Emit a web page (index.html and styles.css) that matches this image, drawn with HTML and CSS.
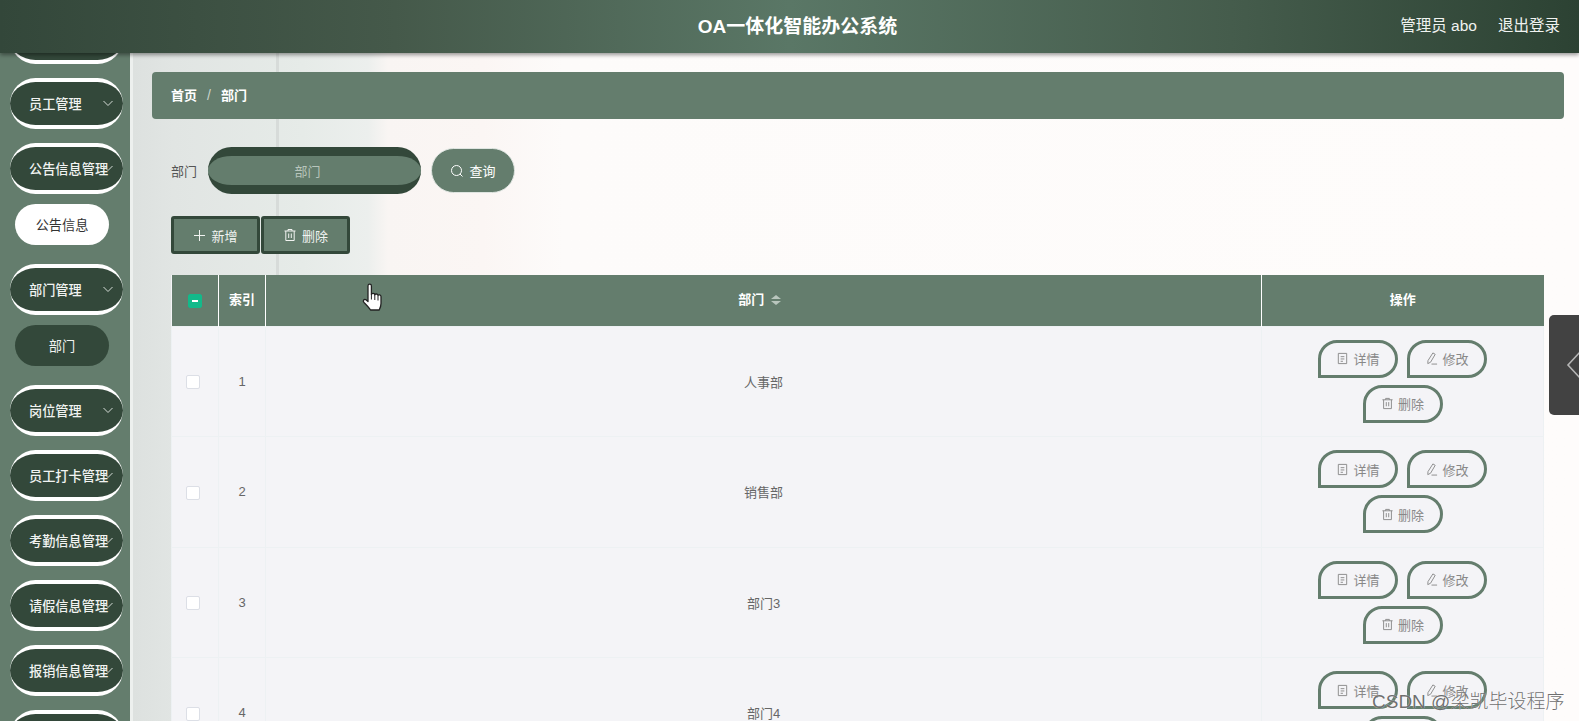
FILE: index.html
```html
<!DOCTYPE html>
<html lang="zh-CN">
<head>
  <meta charset="UTF-8">
  <title>OA一体化智能办公系统</title>
  <link rel="stylesheet" href="styles.css">
</head>
<body>
  <svg class="icon-defs" width="0" height="0">
    <symbol id="i-doc" viewBox="0 0 14 14"><path d="M2.500 1.500h9v11h-9z M5 5h4 M5 7.500h4 M5 10h2.500" fill="none" stroke="currentColor"/></symbol>
    <symbol id="i-edit" viewBox="0 0 14 14"><path d="M8.500 1l2.500 1.500L6 11 3 12.500l.2-3.200z M7 13h6" fill="none" stroke="currentColor"/></symbol>
    <symbol id="i-trash" viewBox="0 0 14 14"><path d="M1.500 3h11 M5 3V1.500h4V3 M2.800 3v9.500h8.400V3 M5.700 5.500v4.500 M8.300 5.500v4.500" fill="none" stroke="currentColor"/></symbol>
    <symbol id="i-down" viewBox="0 0 12 12"><path d="M1.500 4l4.500 4.500L10.500 4" fill="none" stroke="currentColor"/></symbol>
  </svg>

  <header class="topbar">
    <div></div>
    <div class="topbar-title">OA一体化智能办公系统</div>
    <div class="topbar-user">
      <span>管理员 abo</span>
      <span>退出登录</span>
    </div>
  </header>

  <div class="layout">
    <aside class="sidebar">
      <div class="sidebar-thumb"></div>
      <div class="menu-group menu-first"><div class="menu-item"></div></div>
      <div class="menu-group">
        <div class="menu-item">员工管理<svg class="menu-arrow"><use href="#i-down"/></svg></div>
      </div>
      <div class="menu-group">
        <div class="menu-item">公告信息管理<svg class="menu-arrow"><use href="#i-down"/></svg></div>
        <div class="menu-sub">公告信息</div>
      </div>
      <div class="menu-group">
        <div class="menu-item">部门管理<svg class="menu-arrow"><use href="#i-down"/></svg></div>
        <div class="menu-sub menu-sub-active">部门</div>
      </div>
      <div class="menu-group">
        <div class="menu-item">岗位管理<svg class="menu-arrow"><use href="#i-down"/></svg></div>
      </div>
      <div class="menu-group">
        <div class="menu-item">员工打卡管理<svg class="menu-arrow"><use href="#i-down"/></svg></div>
      </div>
      <div class="menu-group">
        <div class="menu-item">考勤信息管理<svg class="menu-arrow"><use href="#i-down"/></svg></div>
      </div>
      <div class="menu-group">
        <div class="menu-item">请假信息管理<svg class="menu-arrow"><use href="#i-down"/></svg></div>
      </div>
      <div class="menu-group">
        <div class="menu-item">报销信息管理<svg class="menu-arrow"><use href="#i-down"/></svg></div>
      </div>
      <div class="menu-group">
        <div class="menu-item"></div>
      </div>
    </aside>

    <main class="content">
      <div class="breadcrumb">
        <b>首页</b>
        <span class="breadcrumb-sep">/</span>
        <b>部门</b>
      </div>

      <div class="search-row">
        <label class="search-label">部门</label>
        <div class="search-input">部门</div>
        <button class="search-btn">
          <svg width="14" height="14" viewBox="0 0 14 14"><circle cx="6.500" cy="6.500" r="5" fill="none" stroke="currentColor"/><path d="M10 10l2.500 2.500" stroke="currentColor"/></svg>
          查询
        </button>
      </div>

      <div class="action-row">
        <button class="action-btn">
          <svg width="13" height="13" viewBox="0 0 13 13"><path d="M6.500 1v11 M1 6.500h11" stroke="currentColor"/></svg>
          新增
        </button>
        <button class="action-btn">
          <svg width="14" height="14"><use href="#i-trash"/></svg>
          删除
        </button>
      </div>

      <table class="data-table">
        <colgroup>
          <col class="col-check"><col class="col-index"><col><col class="col-ops">
        </colgroup>
        <thead>
          <tr>
            <th><span class="check check-on"></span></th>
            <th>索引</th>
            <th class="th-name">部门 <span class="sort"><i class="sort-up"></i><i class="sort-down"></i></span></th>
            <th>操作</th>
          </tr>
        </thead>
        <tbody>
          <tr>
            <td><span class="check"></span></td>
            <td>1</td>
            <td class="cell-name">人事部</td>
            <td>
              <div class="ops">
                <a class="op-btn"><svg><use href="#i-doc"/></svg>详情</a>
                <a class="op-btn"><svg><use href="#i-edit"/></svg>修改</a>
                <a class="op-btn"><svg><use href="#i-trash"/></svg>删除</a>
              </div>
            </td>
          </tr>
          <tr>
            <td><span class="check"></span></td>
            <td>2</td>
            <td class="cell-name">销售部</td>
            <td>
              <div class="ops">
                <a class="op-btn"><svg><use href="#i-doc"/></svg>详情</a>
                <a class="op-btn"><svg><use href="#i-edit"/></svg>修改</a>
                <a class="op-btn"><svg><use href="#i-trash"/></svg>删除</a>
              </div>
            </td>
          </tr>
          <tr>
            <td><span class="check"></span></td>
            <td>3</td>
            <td class="cell-name">部门3</td>
            <td>
              <div class="ops">
                <a class="op-btn"><svg><use href="#i-doc"/></svg>详情</a>
                <a class="op-btn"><svg><use href="#i-edit"/></svg>修改</a>
                <a class="op-btn"><svg><use href="#i-trash"/></svg>删除</a>
              </div>
            </td>
          </tr>
          <tr>
            <td><span class="check"></span></td>
            <td>4</td>
            <td class="cell-name">部门4</td>
            <td>
              <div class="ops">
                <a class="op-btn"><svg><use href="#i-doc"/></svg>详情</a>
                <a class="op-btn"><svg><use href="#i-edit"/></svg>修改</a>
                <a class="op-btn"><svg><use href="#i-trash"/></svg>删除</a>
              </div>
            </td>
          </tr>
        </tbody>
      </table>
    </main>
  </div>

  <div class="side-tab">
    <svg width="30" height="100" viewBox="0 0 30 100"><path d="M32 36L19 50l13 14" fill="none" stroke="#b5b5b5" stroke-width="1.600"/></svg>
  </div>

  <svg class="cursor" width="24" height="32" viewBox="0 0 24 32">
    <path d="M7 3c0-2.400 3.400-2.400 3.400 0v8.500c.4-1.500 3.200-1.400 3.400.4.5-1.400 3-1.200 3.200.6.6-1 2.800-.8 3 1v7c0 3-.8 4.500-1.800 6.500H9.500C8 24.500 5.500 22 3 19.500c-1.700-1.800.2-4 2.200-2.600L7 18.500z" fill="#fff" stroke="#222" stroke-width="1.300" stroke-linejoin="round"/>
    <path d="M10.400 11.500v5 M13.800 12v5 M17 13v4.500" stroke="#222" fill="none"/>
  </svg>

  <div class="watermark">CSDN @梁凯毕设程序</div>
</body>
</html>
```

FILE: styles.css
```css
* {
  box-sizing: border-box;
  margin: 0;
  padding: 0;
}

html, body {
  height: 100%;
  overflow: hidden;
}

body {
  font-family: "Liberation Sans", "Noto Sans CJK SC", sans-serif;
  font-size: 13px;
  color: #666666;
  position: relative;
}

.icon-defs {
  position: absolute;
}

.topbar {
  height: 53px;
  display: grid;
  grid-template-columns: 1fr auto 1fr;
  align-items: center;
  padding: 0 19px 5px 35px;
  color: #ffffff;
  background: linear-gradient(90deg, #33473a 0%, #45594a 25%, #5a7766 50%, #455c4c 78%, #2c4233 100%);
  box-shadow: 0 2px 4px rgba(0, 0, 0, 0.4);
  position: relative;
  z-index: 2;
}

.topbar-title {
  font-size: 19px;
  font-weight: bold;
}

.topbar-user {
  display: flex;
  justify-content: flex-end;
  gap: 21px;
  font-size: 15.500px;
  color: #f0f3f1;
}

.layout {
  display: flex;
  height: 668px;
}

.sidebar {
  width: 133px;
  flex-shrink: 0;
  background: #647d6d;
  border-right: 3px solid #edf0ee;
  padding: 0 7px 0 10px;
  overflow: hidden;
  position: relative;
}

.sidebar-thumb {
  position: absolute;
  top: 113px;
  right: -3px;
  width: 1px;
  height: 471px;
  background: #b9c2bd;
}

.menu-group {
  display: flow-root;
  margin-bottom: 14px;
}

.menu-first {
  margin-top: -40px;
}

.menu-item {
  height: 51px;
  display: flex;
  align-items: center;
  padding-left: 19px;
  background: #33483a;
  border-style: solid;
  border-color: #ffffff;
  border-width: 4px 0;
  border-radius: 26px;
  color: #f1f3f1;
  font-size: 13.200px;
  font-weight: 500;
  white-space: nowrap;
  position: relative;
}

.menu-arrow {
  position: absolute;
  right: 9px;
  top: 15px;
  width: 12px;
  height: 12px;
  color: #d5dcd7;
}

.menu-sub {
  height: 41px;
  width: 94px;
  margin: 10px 0 5px 5px;
  display: flex;
  align-items: center;
  justify-content: center;
  border-radius: 21px;
  background: #ffffff;
  color: #333333;
  font-size: 13.200px;
}

.menu-sub-active {
  background: #33483a;
  color: #f1f3f1;
}

.content {
  flex: 1;
  min-width: 0;
  padding: 19px 15px 0 19px;
  background:
    linear-gradient(#d7dbd9, #d7dbd9) 143px 0 / 3px 100% no-repeat,
    linear-gradient(90deg, #dde1df 0, #e1e5e3 40px, #e6ebe8 170px, #ecefed 235px, #f9f5f3 255px, #fbf6f4 350px, #fdfbfa 430px, #fefcfb 100%);
}

.breadcrumb {
  height: 47px;
  display: flex;
  align-items: center;
  gap: 10px;
  padding: 0 0 2px 19px;
  background: #647d6d;
  border-radius: 4px;
  color: #ffffff;
  font-size: 13px;
}

.breadcrumb-sep {
  color: #c9d4cc;
  font-size: 14px;
}

.search-row {
  display: flex;
  align-items: center;
  margin-top: 28px;
  padding-left: 19px;
}

.search-label {
  width: 37px;
  color: #555555;
}

.search-input {
  width: 213px;
  height: 47px;
  display: flex;
  align-items: center;
  justify-content: center;
  padding-right: 14px;
  background: #647d6d;
  border-style: solid;
  border-color: #33483a;
  border-width: 9px 0;
  border-radius: 24px;
  color: #b8c5bc;
}

.search-btn {
  width: 84px;
  height: 45px;
  margin-left: 10px;
  display: flex;
  align-items: center;
  justify-content: center;
  gap: 5px;
  border: 1px solid #dfe5e1;
  border-radius: 23px;
  background: #647d6d;
  color: #ffffff;
  font: inherit;
}

.action-row {
  display: flex;
  gap: 1px;
  margin-top: 22px;
  padding-left: 19px;
}

.action-btn {
  width: 89px;
  height: 38px;
  display: flex;
  align-items: center;
  justify-content: center;
  gap: 5px;
  border: 3px solid #33483a;
  border-radius: 3px;
  background: #647d6d;
  color: #f1f3f1;
  font: inherit;
}

.data-table {
  width: 1373px;
  margin: 21px 0 0 19px;
  border-collapse: collapse;
  table-layout: fixed;
  background: #f4f4f7;
}

.col-check,
.col-index {
  width: 47px;
}

.col-ops {
  width: 282px;
}

.data-table th {
  height: 51px;
  padding-bottom: 4px;
  background: #647d6d;
  border-left: 1px solid #ffffff;
  color: #ffffff;
  font-weight: bold;
  font-size: 13px;
}

.data-table th:first-child {
  border-left: 0;
}

.data-table .th-name {
  padding-right: 8px;
}

.data-table td {
  height: 110.500px;
  border: 1px solid #edf1f3;
  text-align: center;
  color: #666666;
}

.check {
  display: inline-block;
  width: 14px;
  height: 14px;
  margin-right: 4px;
  vertical-align: middle;
  background: #ffffff;
  border: 1px solid #dcdfe6;
  border-radius: 2px;
}

.check-on {
  margin: 6px 0 0 0;
  background: #13b98a;
  border-color: #13b98a;
  position: relative;
}

.check-on::after {
  content: "";
  position: absolute;
  left: 3px;
  top: 5px;
  width: 6px;
  height: 2px;
  background: #ffffff;
}

.sort {
  display: inline-flex;
  flex-direction: column;
  gap: 2px;
  margin-left: 3px;
  vertical-align: middle;
}

.sort i {
  display: block;
  width: 0;
  height: 0;
  border-left: 5px solid transparent;
  border-right: 5px solid transparent;
}

.sort-up {
  border-bottom: 4px solid #b9c6bd;
}

.sort-down {
  border-top: 4px solid #b9c6bd;
}

.ops {
  width: 180px;
  margin: 0 auto;
  display: flex;
  flex-wrap: wrap;
  justify-content: center;
  gap: 7px 9px;
}

.op-btn {
  width: 80px;
  height: 38px;
  display: flex;
  align-items: center;
  justify-content: center;
  gap: 4px;
  background: #f4f4f7;
  border: 3px solid #647d6d;
  border-radius: 20px 20px 20px 0;
  color: #888888;
  font-size: 13px;
}

.op-btn svg {
  width: 13px;
  height: 13px;
}

.side-tab {
  position: absolute;
  left: 1549px;
  top: 315px;
  width: 30px;
  height: 100px;
  background: #424242;
  border-radius: 5px 0 0 5px;
}

.cursor {
  position: absolute;
  left: 361px;
  top: 283px;
}

.watermark {
  position: absolute;
  left: 1372px;
  top: 686px;
  font-size: 19px;
  font-weight: 300;
  color: rgba(85, 85, 85, 0.85);
  text-shadow: 0 0 1px #ffffff;
  white-space: nowrap;
}
```
